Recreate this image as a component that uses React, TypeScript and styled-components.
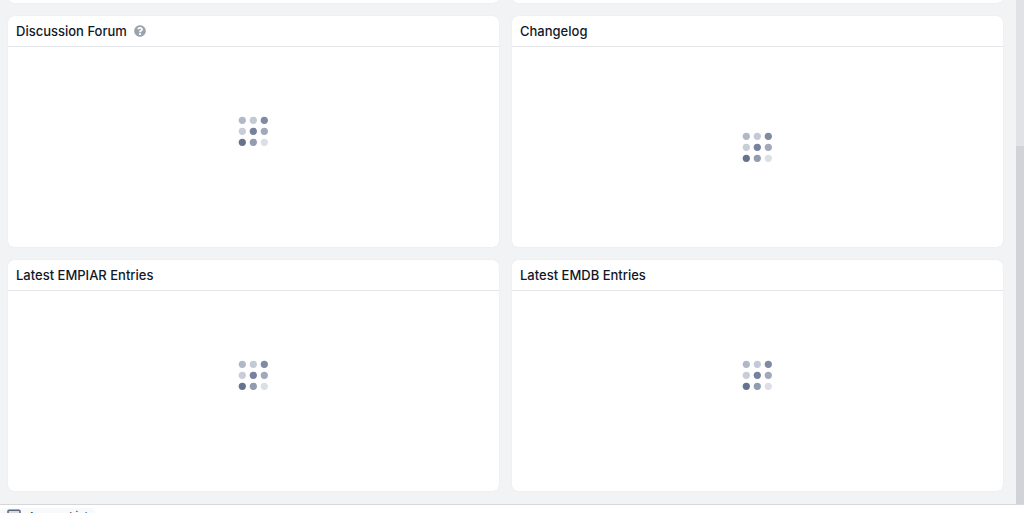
import React from "react";
import styled, { createGlobalStyle } from "styled-components";

const GlobalStyle = createGlobalStyle`
  * { box-sizing: border-box; }
  body { margin: 0; background: #f2f3f5; color: #111827; font-family: Inter, "Liberation Sans", sans-serif; font-size: 13px; }
`;

const Page = styled.div`
  display: flex;
  flex-direction: column;
  height: 100vh;
  overflow: hidden;
`;

const Workspace = styled.div`
  display: flex;
  flex: 1;
  min-height: 0;
`;

const Dashboard = styled.main`
  flex: 1;
  min-width: 0;
  display: flex;
  flex-direction: column;
  justify-content: flex-end;
  overflow: hidden;
  padding: 0 13px 13px 8px;
`;

const CardGrid = styled.div`
  display: grid;
  grid-template-columns: 1fr 1fr;
  gap: 13px;
`;

const Card = styled.section`
  display: flex;
  flex-direction: column;
  height: 231px;
  background: #fff;
  border-radius: 6px;
  box-shadow: 0 0 1px rgba(17, 24, 39, 0.12);
`;

const CardHeader = styled.header`
  display: flex;
  align-items: center;
  gap: 7px;
  height: 31px;
  padding: 0 8px;
  border-bottom: 1px solid #e5e7eb;
`;

const CardTitle = styled.h2`
  margin: 0;
  font-size: 13px;
  line-height: 20px;
  font-weight: 500;
`;

const HelpButton = styled.button`
  display: flex;
  padding: 0;
  border: 0;
  background: none;
`;

const CardBody = styled.div<{ $raised: boolean }>`
  display: flex;
  flex: 1;
  align-items: center;
  justify-content: center;
  padding-bottom: ${(p) => (p.$raised ? 32 : 0)}px;
`;

const ScrollTrack = styled.div`
  display: flex;
  flex-direction: column;
  justify-content: flex-end;
  width: 8px;
  background: #e1e2e6;
`;

const ScrollThumb = styled.div`
  height: 71%;
  background: #d1d3d9;
`;

const Footer = styled.footer`
  height: 9px;
  border-top: 1px solid #d5d7db;
  background: #fff;
  overflow: hidden;
`;

const FooterTab = styled.a`
  display: flex;
  align-items: flex-start;
  gap: 7px;
  width: max-content;
  margin-top: 3px;
  padding: 1px 4px 1px 7px;
  border-radius: 4px;
  background: #f8f9fa;
  color: #374151;
  font-size: 11px;
  line-height: 15px;
  text-decoration: none;
`;

const DOT_SHADES = ["#b1b8c7", "#c4cad5", "#808ba2", "#c8cdd7", "#76829d", "#a0a8ba", "#66738f", "#929cb0", "#dcdfe6"];

function Loader() {
  return (
    <svg width="31" height="30" viewBox="0 0 31 30" role="img" aria-label="Loading">
      {DOT_SHADES.map((shade, i) => (
        <circle key={i} cx={4.3 + (i % 3) * 11} cy={4.3 + Math.floor(i / 3) * 11} r="3.6" fill={shade} />
      ))}
    </svg>
  );
}

function HelpIcon() {
  return (
    <svg width="12" height="12" viewBox="0 0 512 512" fill="#9ca3af" aria-hidden="true">
      <path d="M504 256c0 136.997-111.043 248-248 248S8 392.997 8 256C8 119.083 119.043 8 256 8s248 111.083 248 248zM262.655 90c-54.497 0-89.255 22.957-116.549 63.758-3.536 5.286-2.353 12.415 2.715 16.258l34.699 26.31c5.205 3.947 12.621 3.008 16.665-2.122 17.864-22.658 30.113-35.797 57.303-35.797 20.429 0 45.698 13.148 45.698 32.958 0 14.976-12.363 22.667-32.534 33.976C247.128 238.528 216 254.941 216 296v4c0 6.627 5.373 12 12 12h56c6.627 0 12-5.373 12-12v-1.333c0-28.462 83.186-29.647 83.186-106.667 0-58.002-60.165-102-116.531-102zM256 338c-25.365 0-46 20.635-46 46 0 25.364 20.635 46 46 46s46-20.636 46-46c0-25.365-20.635-46-46-46z" />
    </svg>
  );
}

function FooterIcon() {
  return (
    <svg width="14" height="14" viewBox="0 0 14 14" aria-hidden="true">
      <rect x="1" y="1.2" width="12" height="12" rx="1" fill="#d7dae0" stroke="#596579" strokeWidth="1.5" />
    </svg>
  );
}

type Panel = { title?: string; help?: boolean; raised?: boolean };

const PANELS: Panel[] = [
  {},
  {},
  { title: "Discussion Forum", help: true, raised: true },
  { title: "Changelog" },
  { title: "Latest EMPIAR Entries", raised: true },
  { title: "Latest EMDB Entries", raised: true },
];

export default function App() {
  return (
    <Page>
      <GlobalStyle />
      <Workspace>
        <Dashboard>
          <CardGrid>
            {PANELS.map((panel, i) => (
              <Card key={i}>
                {panel.title && (
                  <>
                    <CardHeader>
                      <CardTitle>{panel.title}</CardTitle>
                      {panel.help && (
                        <HelpButton type="button" aria-label="Help">
                          <HelpIcon />
                        </HelpButton>
                      )}
                    </CardHeader>
                    <CardBody $raised={!!panel.raised}>
                      <Loader />
                    </CardBody>
                  </>
                )}
              </Card>
            ))}
          </CardGrid>
        </Dashboard>
        <ScrollTrack>
          <ScrollThumb />
        </ScrollTrack>
      </Workspace>
      <Footer>
        <FooterTab href="#">
          <FooterIcon />
          Access Link
        </FooterTab>
      </Footer>
    </Page>
  );
}
